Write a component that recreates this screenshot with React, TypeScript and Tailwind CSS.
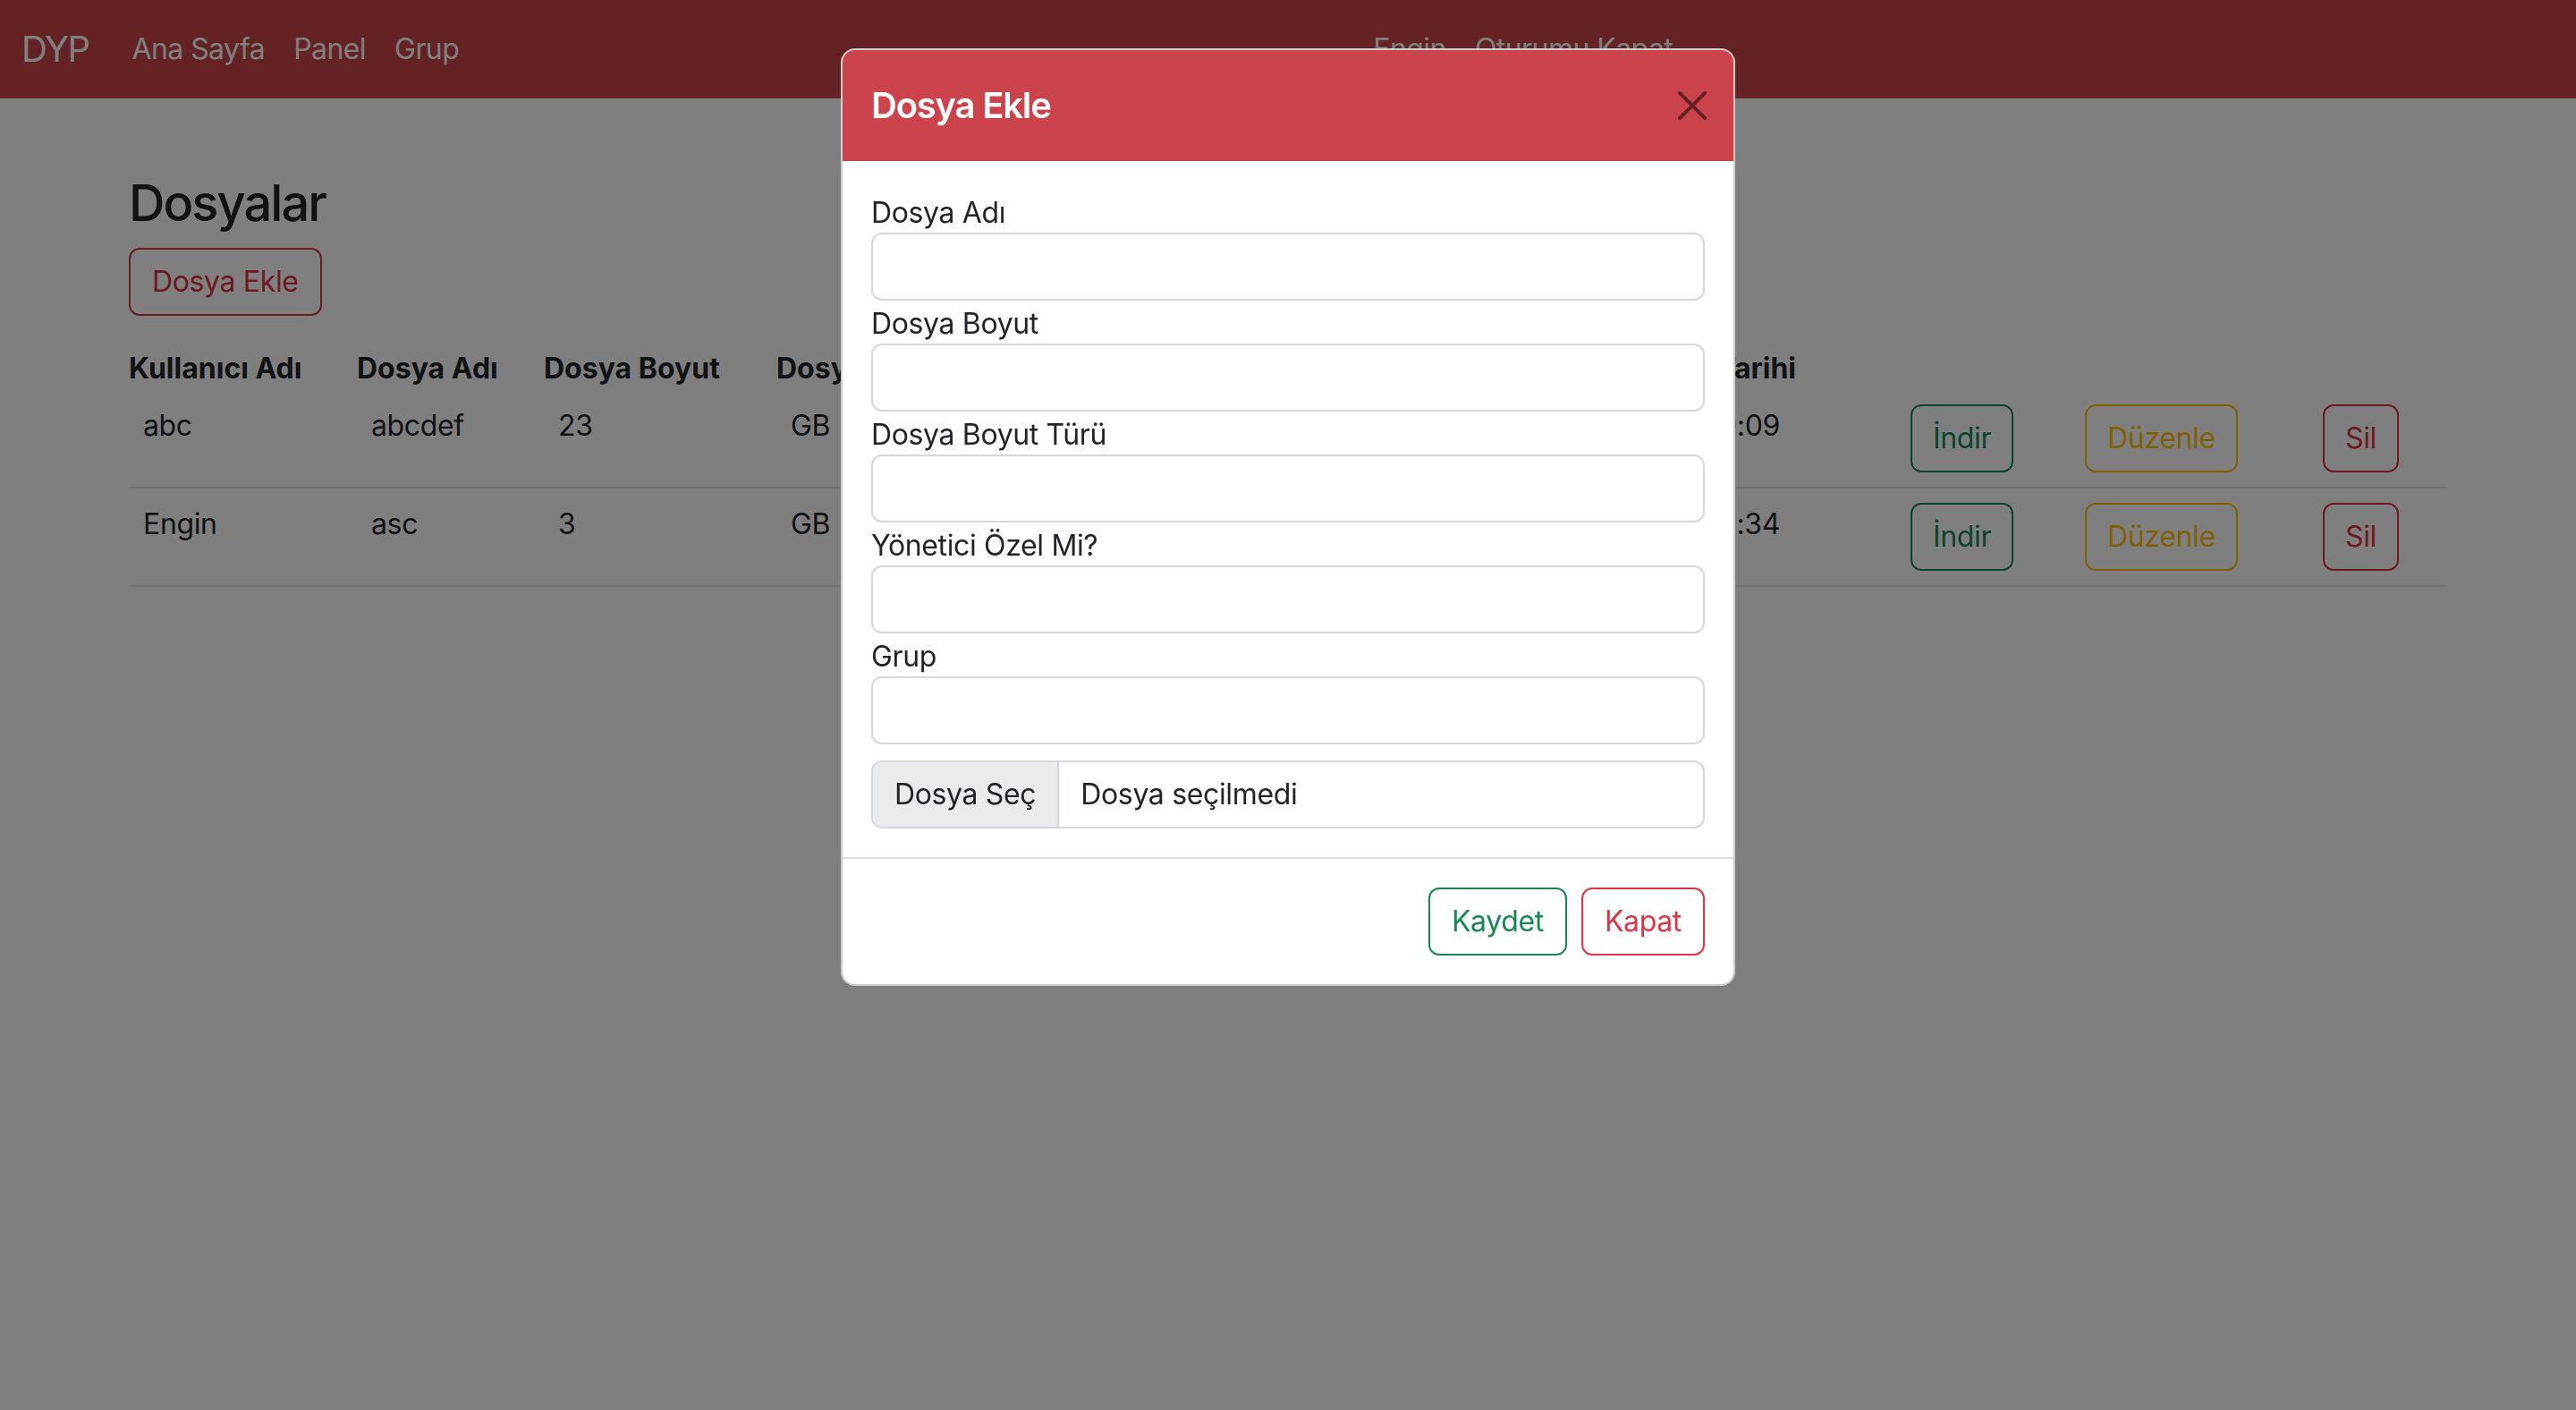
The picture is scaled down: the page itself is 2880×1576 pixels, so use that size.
import React from "react";

const rows = [
  { user: "abc", name: "abcdef", size: "23", unit: "GB", admin: "Hayır", group: "Genel", date: "2023-05-14 13:20:09" },
  { user: "Engin", name: "asc", size: "3", unit: "GB", admin: "Evet", group: "Genel", date: "2023-05-15 09:41:34" },
];

const fields = ["Dosya Adı", "Dosya Boyut", "Dosya Boyut Türü", "Yönetici Özel Mi?", "Grup"];

const OutlineButton = ({ label, tone }: { label: string; tone: "green" | "yellow" | "red" }) => {
  const cls =
    tone === "green"
      ? "border-[#198754] text-[#198754]"
      : tone === "yellow"
      ? "border-[#ffc107] text-[#ffc107]"
      : "border-[#dc3545] text-[#dc3545]";
  return (
    <button className={`h-[76px] px-[23px] rounded-[12px] border-2 bg-transparent text-[32px] leading-[48px] ${cls}`}>
      {label}
    </button>
  );
};

const App = () => {
  return (
    <div className="min-h-screen bg-white text-[#212529] font-[Inter,sans-serif] tracking-[-0.022em]">
      {/* navbar */}
      <nav className="h-[110px] bg-[#cb444b] flex items-center px-[24px] text-white tracking-[-0.035em]">
        <span className="text-[40px] leading-[60px] mr-[32px] tracking-[-0.04em]">DYP</span>
        <a className="px-[16px] text-[32px] leading-[48px]">Ana Sayfa</a>
        <a className="px-[16px] text-[32px] leading-[48px]">Panel</a>
        <a className="px-[16px] text-[32px] leading-[48px]">Grup</a>
        <div className="flex ml-[990px]">
          <a className="px-[16px] text-[32px] leading-[48px]">Engin</a>
          <a className="px-[16px] text-[32px] leading-[48px]">Oturumu Kapat</a>
        </div>
      </nav>

      {/* page */}
      <main className="mx-[144px] mt-[84px]">
        <h3 className="text-[56px] leading-[67px] font-medium tracking-[-0.035em] mb-[16px]">Dosyalar</h3>
        <button className="h-[76px] px-[24px] rounded-[12px] border-2 border-[#dc3545] text-[#dc3545] text-[32px] leading-[48px] mb-[35px]">
          Dosya Ekle
        </button>
        <table className="table-fixed w-[2592px] border-collapse text-[32px] leading-[48px]">
          <colgroup>
            <col className="w-[255px]" />
            <col className="w-[209px]" />
            <col className="w-[260px]" />
            <col className="w-[282px]" />
            <col className="w-[300px]" />
            <col className="w-[150px]" />
            <col className="w-[408px]" />
            <col className="w-[307px]" />
            <col className="w-[266px]" />
            <col className="w-[155px]" />
          </colgroup>
          <thead>
            <tr className="font-bold text-left tracking-normal">
              <th className="p-0 font-bold">Kullanıcı Adı</th>
              <th className="p-0 font-bold">Dosya Adı</th>
              <th className="p-0 font-bold">Dosya Boyut</th>
              <th className="p-0 font-bold">Dosya Boyut Türü</th>
              <th className="p-0 font-bold">Yönetici Özel Mi</th>
              <th className="p-0 font-bold">Grup</th>
              <th className="p-0 font-bold text-right whitespace-nowrap">Yükleme Tarihi</th>
              <th className="p-0" />
              <th className="p-0" />
              <th className="p-0" />
            </tr>
          </thead>
          <tbody>
            {rows.map((r) => (
              <tr key={r.user} className="border-b-2 border-[#dee2e6] align-top">
                <td className="p-[16px]">{r.user}</td>
                <td className="p-[16px]">{r.name}</td>
                <td className="p-[16px]">{r.size}</td>
                <td className="p-[16px]">{r.unit}</td>
                <td className="p-[16px]">{r.admin}</td>
                <td className="p-[16px]">{r.group}</td>
                <td className="py-[16px] pr-[18px] text-right whitespace-nowrap">{r.date}</td>
                <td className="py-[16px] pl-[128px]">
                  <OutlineButton label="İndir" tone="green" />
                </td>
                <td className="py-[16px] pl-[16px]">
                  <OutlineButton label="Düzenle" tone="yellow" />
                </td>
                <td className="py-[16px] pl-[16px]">
                  <OutlineButton label="Sil" tone="red" />
                </td>
              </tr>
            ))}
          </tbody>
        </table>
      </main>

      {/* backdrop */}
      <div className="fixed inset-0 bg-black/50" />

      {/* modal */}
      <div className="absolute top-[54px] left-[940px] w-[1000px] bg-white border-2 border-black/20 rounded-[16px] overflow-hidden">
        <div className="bg-[#cb444b] flex items-center justify-between p-[32px]">
          <h5 className="text-[40px] leading-[60px] font-semibold tracking-[-0.03em] text-white">Dosya Ekle</h5>
          <button className="w-[32px] h-[32px] mr-[-2px]">
            <svg viewBox="0 0 16 16" className="w-[32px] h-[32px]" fill="#000" fillOpacity="0.5">
              <path d="M.293.293a1 1 0 0 1 1.414 0L8 6.586 14.293.293a1 1 0 1 1 1.414 1.414L9.414 8l6.293 6.293a1 1 0 0 1-1.414 1.414L8 9.414l-6.293 6.293a1 1 0 0 1-1.414-1.414L6.586 8 .293 1.707a1 1 0 0 1 0-1.414z" />
            </svg>
          </button>
        </div>
        <div className="p-[32px]">
          {fields.map((f) => (
            <div key={f}>
              <label className="block text-[32px] leading-[48px] pt-[2px] -mb-[2px]">{f}</label>
              <input className="block w-full h-[76px] border-2 border-[#d4d8dd] rounded-[12px] px-[24px] text-[32px] outline-none" />
            </div>
          ))}
          <div className="mt-[18px] flex h-[76px] border-2 border-[#d4d8dd] rounded-[12px] overflow-hidden text-[32px] leading-[48px]">
            <span className="flex items-center bg-[#e9ecef] px-[24px] border-r-2 border-[#d4d8dd]">Dosya Seç</span>
            <span className="flex items-center px-[24px]">Dosya seçilmedi</span>
          </div>
        </div>
        <div className="border-t-2 border-[#dee2e6] flex justify-end gap-[16px] px-[32px] py-[32px]">
          <button className="h-[76px] px-[24px] rounded-[12px] border-2 border-[#198754] text-[#198754] text-[32px] leading-[48px]">
            Kaydet
          </button>
          <button className="h-[76px] px-[24px] rounded-[12px] border-2 border-[#dc3545] text-[#dc3545] text-[32px] leading-[48px]">
            Kapat
          </button>
        </div>
      </div>
    </div>
  );
};

export default App;
